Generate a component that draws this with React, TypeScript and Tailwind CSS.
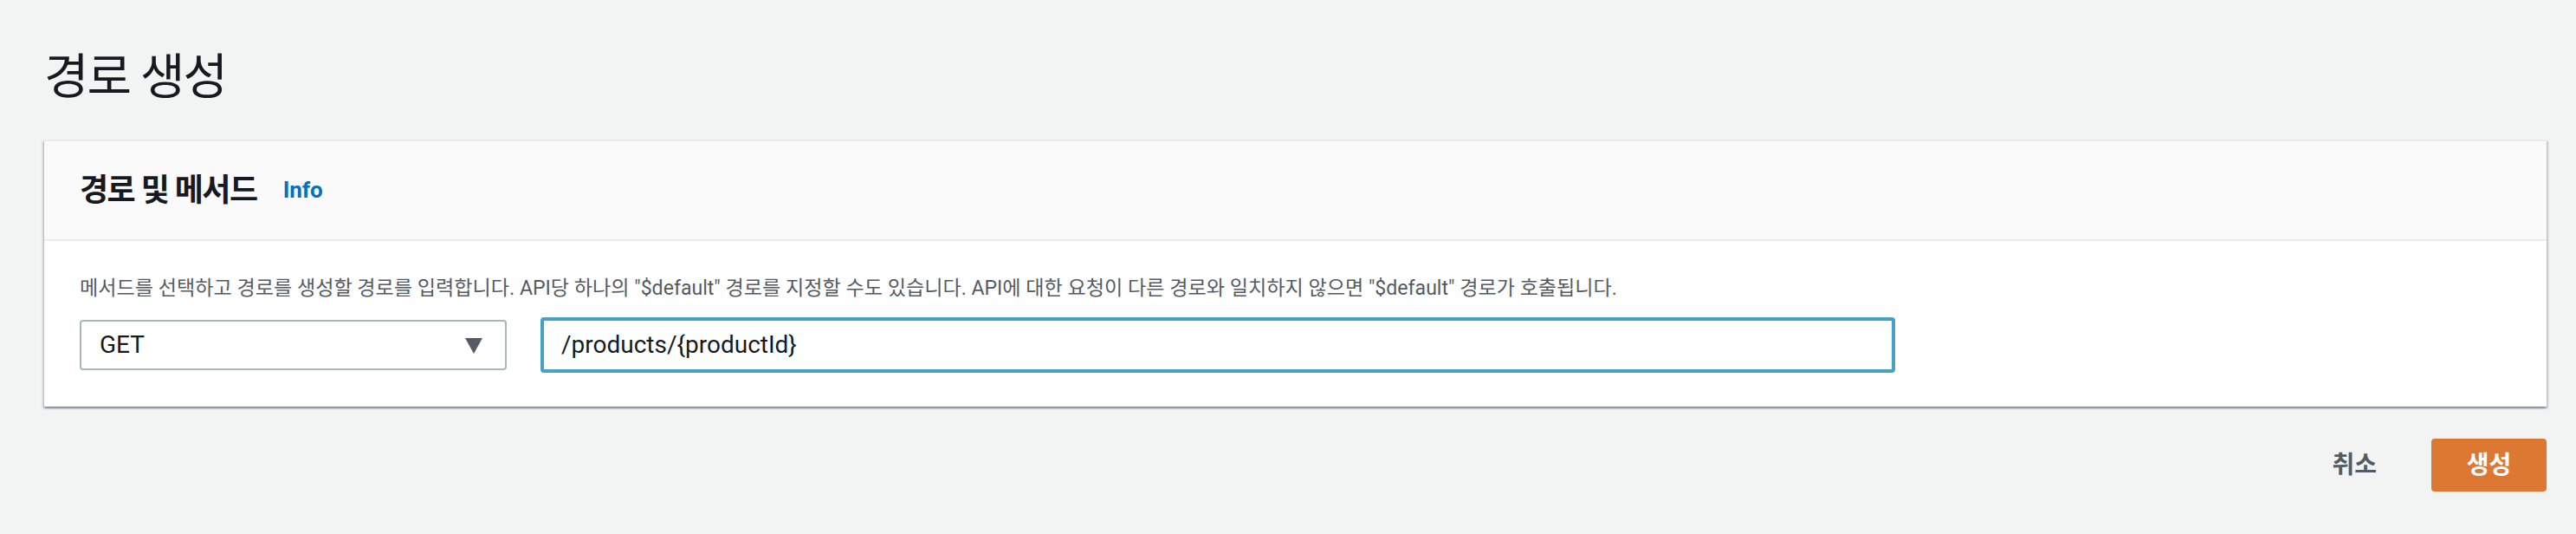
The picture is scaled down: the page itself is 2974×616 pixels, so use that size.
const KR = { fontFamily: 'Roboto, "Noto Sans CJK KR", sans-serif' };

function Caret() {
  return (
    <svg width="20" height="20" viewBox="0 0 20 20" className="shrink-0">
      <path d="M0 2 H20 L10 20 Z" fill="#545b64" />
    </svg>
  );
}

export default function App() {
  return (
    <div
      style={KR}
      className="min-h-[616px] w-[2974px] bg-[#f2f3f3] pl-[51px] pr-[34px] pt-[57px] text-[#16191f]"
    >
      <h1 className="mb-[40px] text-[56px] font-normal leading-[64px] tracking-[-2px]">경로 생성</h1>

      <section className="border-t-2 border-[#eaeded] bg-white shadow-[0_2px_2px_0_rgba(0,28,36,0.3),2px_2px_2px_0_rgba(0,28,36,0.15),-2px_2px_2px_0_rgba(0,28,36,0.15)]">
        <header className="flex h-[115px] items-center gap-[30px] border-b-2 border-[#eaeded] bg-[#fafafa] px-[41px]">
          <h2 className="text-[36px] font-bold tracking-[-1.5px]">경로 및 메서드</h2>
          <a className="text-[26px] font-bold text-[#0073bb]">Info</a>
        </header>

        <div className="px-[41px] pb-[39px] pt-[40px]">
          <p className="mb-[18px] text-[23.1px] leading-[30px] text-[#545b64]">
            메서드를 선택하고 경로를 생성할 경로를 입력합니다. API당 하나의 "$default" 경로를 지정할 수도 있습니다. API에 대한 요청이 다른 경로와 일치하지 않으면 "$default" 경로가 호출됩니다.
          </p>
          <div className="flex h-[64px] items-center gap-[39px]">
            <div className="flex h-[58px] w-[493px] items-center justify-between rounded-[4px] border-2 border-[#aab7b8] pl-[21px] pr-[26px]">
              <span className="text-[28px]">GET</span>
              <Caret />
            </div>
            <div className="flex h-[64px] w-[1564px] items-center rounded-[4px] border-4 border-[#47a0c6] px-[20px]">
              <span className="text-[28px]">/products/{'{'}productId{'}'}</span>
            </div>
          </div>
        </div>
      </section>

      <div className="mt-[37px] flex items-center justify-end gap-[63px]">
        <button className="text-[28px] font-bold text-[#545b64]">취소</button>
        <button className="h-[61px] w-[133px] rounded-[4px] bg-[#dd7833] text-[28px] font-bold text-white">생성</button>
      </div>
    </div>
  );
}
